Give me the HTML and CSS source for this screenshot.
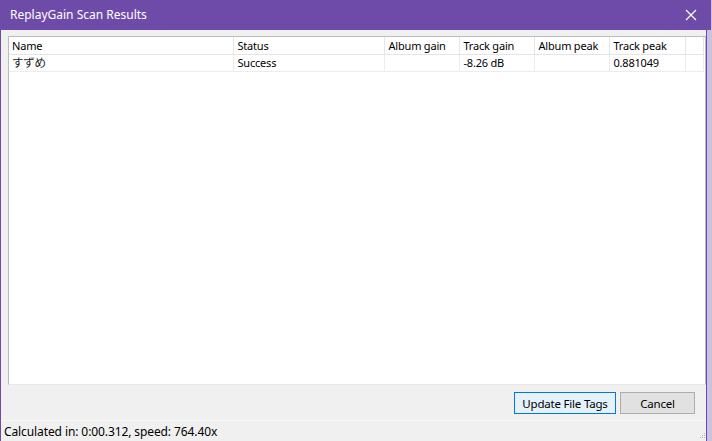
FILE: index.html
```html
<!DOCTYPE html>
<html>
<head>
<meta charset="utf-8">
<link rel="stylesheet" href="styles.css">
</head>
<body>
<div class="window">
  <div class="titlebar">
    <span class="title">ReplayGain Scan Results</span>
    <svg class="close" width="12" height="12" viewBox="0 0 12 12"><path d="M1 1 L11 11 M11 1 L1 11" stroke="#fff" stroke-width="1.2" fill="none"/></svg>
  </div>
  <div class="client">
    <div class="list">
      <table class="grid">
        <colgroup>
          <col class="c-name"><col class="c-status"><col class="c-num"><col class="c-num"><col class="c-num"><col class="c-num2"><col>
        </colgroup>
        <thead>
          <tr>
            <th class="first">Name</th><th>Status</th><th>Album gain</th><th>Track gain</th><th>Album peak</th><th>Track peak</th><th class="filler"></th>
          </tr>
        </thead>
        <tbody>
          <tr>
            <td class="first jp">すずめ</td><td>Success</td><td></td><td>-8.26 dB</td><td></td><td>0.881049</td><td class="filler"></td>
          </tr>
        </tbody>
      </table>
    </div>
    <div class="buttons">
      <button class="btn default">Update File Tags</button>
      <button class="btn">Cancel</button>
    </div>
    <div class="status">
      <span>Calculated in: 0:00.312, speed: 764.40x</span>
      <svg class="grip" width="10" height="10" viewBox="0 0 10 10"><g fill="#b8b8b8"><rect x="8" y="2" width="1" height="1"/><rect x="6" y="4" width="1" height="1"/><rect x="8" y="4" width="1" height="1"/><rect x="4" y="6" width="1" height="1"/><rect x="6" y="6" width="1" height="1"/><rect x="8" y="6" width="1" height="1"/></g></svg>
    </div>
  </div>
</div>
</body>
</html>
```
FILE: styles.css
```css
html, body {
  margin: 0;
  padding: 0;
}
body {
  width: 712px;
  height: 441px;
  overflow: hidden;
  background: #c9c2e2;
  font-family: "Noto Sans", "Noto Sans CJK JP", sans-serif;
  font-size: 11px;
  letter-spacing: -0.2px;
  color: #000;
}
.window {
  width: 707px;
  height: 441px;
  display: flex;
  flex-direction: column;
  border-left: 1px solid #6e4aa6;
  border-right: 1px solid #6e4aa6;
  box-sizing: border-box;
}
.titlebar {
  height: 30px;
  flex: none;
  background: #6f4ba9;
  display: flex;
  align-items: center;
  justify-content: space-between;
  width: 711px;
  margin-left: -1px;
  padding: 0 14px 0 10px;
  box-sizing: border-box;
  color: #fff;
}
.title {
  font-size: 12px;
  letter-spacing: 0;
  margin-top: -1px;
}
.close {
  display: block;
}
.client {
  flex: 1;
  background: #f0f0f0;
  display: flex;
  flex-direction: column;
  padding: 6px 0 0 7px;
  min-height: 0;
}
.list {
  height: 347px;
  flex: none;
  width: 696px;
  background: #fff;
  border: 1px solid #bcbcbc;
  border-bottom-color: #e8e8e8;
  overflow: hidden;
}
.grid {
  border-collapse: collapse;
  table-layout: fixed;
  width: 695px;
}
.c-name { width: 224px; }
.c-status { width: 151px; }
.c-num { width: 75px; }
.c-num2 { width: 76px; }
.grid th {
  font-weight: normal;
  text-align: left;
  height: 17px;
  padding: 0 0 0 4px;
  border-right: 1px solid #e5e5e5;
  border-bottom: 1px solid #e5e5e5;
  white-space: nowrap;
  overflow: hidden;
  line-height: 17px;
}
.grid td {
  height: 16px;
  padding: 0 0 0 4px;
  border-right: 1px solid #ececec;
  border-bottom: 1px solid #ececec;
  white-space: nowrap;
  overflow: hidden;
  line-height: 16px;
}
.grid .first {
  padding-left: 3px;
}
.grid .jp {
  font-size: 11.5px;
  color: #222;
}
.buttons {
  display: flex;
  justify-content: flex-end;
  gap: 4px;
  padding: 7px 11px 0 0;
  height: 22px;
  flex: none;
}
.btn {
  font-family: inherit;
  font-size: 11.5px;
  letter-spacing: -0.2px;
  height: 22px;
  background: #e1e1e1;
  border: 1px solid #adadad;
  margin: 0;
  padding: 0;
  color: #000;
}
.btn.default {
  width: 102px;
  border-color: #0078d7;
  box-shadow: inset 0 0 0 1px #e6f0fa;
  background: #e5f1fb;
}
.btn:not(.default) {
  width: 75px;
}
.status {
  margin-top: 6px;
  margin-left: -7px;
  flex: 1;
  border-top: 1px solid #f7f7f7;
  display: flex;
  align-items: center;
  justify-content: space-between;
  padding: 0 0 0 3px;
  font-size: 12px;
  letter-spacing: -0.1px;
  position: relative;
}
.grip {
  position: absolute;
  right: 0;
  bottom: 0;
}
```
